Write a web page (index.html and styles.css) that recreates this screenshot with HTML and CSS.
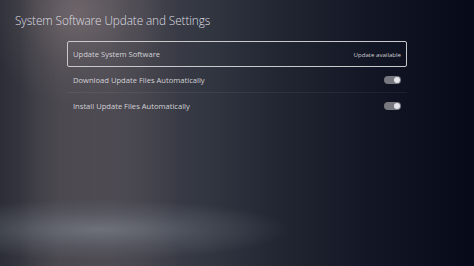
FILE: index.html
```html
<!DOCTYPE html>
<html>
<head>
<meta charset="utf-8">
<link rel="stylesheet" href="styles.css">
</head>
<body>
<div class="screen">
  <div class="beam"></div>
  <div class="haze"></div>
  <h1 class="title">System Software Update and Settings</h1>
  <div class="list">
    <div class="row selected">
      <span class="label">Update System Software</span>
      <span class="value">Update available</span>
    </div>
    <div class="row">
      <span class="label">Download Update Files Automatically</span>
      <span class="toggle"><span class="knob"></span></span>
    </div>
    <div class="row">
      <span class="label">Install Update Files Automatically</span>
      <span class="toggle"><span class="knob"></span></span>
    </div>
  </div>
</div>
</body>
</html>
```

FILE: styles.css
```css
html, body {
  margin: 0;
  padding: 0;
}
body {
  width: 474px;
  height: 266px;
  overflow: hidden;
  background: #0b0e1a;
}
.screen {
  position: relative;
  width: 474px;
  height: 266px;
  overflow: hidden;
  font-family: "Open Sans", "Liberation Sans", sans-serif;
  color: #e6e6ea;
  background: linear-gradient(90deg, #2c2e37 0%, #393941 7%, #3f3f48 30%, #343843 42%, #232733 58%, #131624 78%, #060918 100%);
}
.beam {
  position: absolute;
  left: 0;
  top: 0;
  width: 200px;
  height: 266px;
  background:
    radial-gradient(ellipse 45% 35% at 38% 5%, rgba(150,135,135,0.45) 0%, rgba(130,120,125,0.15) 60%, rgba(0,0,0,0) 100%),
    linear-gradient(90deg, rgba(120,110,115,0) 10%, rgba(120,110,115,0.28) 30%, rgba(120,110,115,0.28) 55%, rgba(120,110,115,0) 90%);
}
.haze {
  position: absolute;
  left: -60px;
  top: 190px;
  width: 380px;
  height: 76px;
  background: radial-gradient(ellipse 50% 40% at 42% 52%, rgba(128,136,146,0.62) 0%, rgba(110,118,128,0.3) 55%, rgba(90,95,105,0) 100%);
}
.title {
  position: relative;
  margin: 0;
  padding: 13px 0 0 15px;
  font-size: 11.8px;
  font-weight: 300;
  line-height: 15px;
  color: #dedee2;
  letter-spacing: -0.1px;
}
.list {
  position: relative;
  margin: 13px 0 0 67px;
  width: 340px;
  display: flex;
  flex-direction: column;
}
.row {
  height: 26px;
  box-sizing: border-box;
  display: flex;
  align-items: center;
  justify-content: space-between;
  padding: 0 6px 0 6px;
}
.row + .row:not(:last-child) {
  border-bottom: 1px solid rgba(255,255,255,0.06);
}
.row.selected {
  border: 1px solid #c9c9cc;
  border-radius: 2px;
  padding: 0 5px 0 5px;
}
.label {
  font-size: 7.6px;
  font-weight: 400;
  color: #d2d2d6;
}
.value {
  font-size: 6.1px;
  color: #cfd0d4;
}
.toggle {
  width: 17px;
  height: 8px;
  border-radius: 4px;
  background: #77797f;
  display: flex;
  align-items: center;
  justify-content: flex-end;
  padding: 0 1px;
  box-sizing: border-box;
}
.knob {
  width: 6px;
  height: 6px;
  border-radius: 50%;
  background: #e4e6ec;
}
```
